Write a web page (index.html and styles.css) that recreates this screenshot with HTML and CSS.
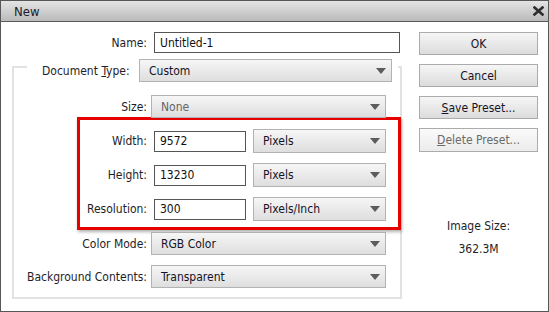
FILE: index.html
```html
<!DOCTYPE html>
<html lang="en">
<head>
  <meta charset="UTF-8">
  <title>New</title>
  <link rel="stylesheet" href="styles.css">
</head>
<body>
  <div class="window">
    <!-- Barre de titre -->
    <div class="titlebar">
      <span class="title">New</span>
      <svg class="close" width="11" height="10" viewBox="0 0 11 10">
        <path d="M1.5 1.5 L9.5 8.5 M9.5 1.5 L1.5 8.5" stroke="#2e2e2e" stroke-width="2.6" stroke-linecap="square"/>
      </svg>
    </div>

    <div class="main">
      <!-- Formulaire -->
      <div class="form">
        <div class="row name-row">
          <label>Name:</label>
          <input type="text" class="field name-field" value="Untitled-1">
        </div>

        <div class="group">
          <div class="legend">
            <label>Document <u>T</u>ype:</label>
            <div class="select doc-select">Custom</div>
          </div>

          <div class="row size-row">
            <label>Size:</label>
            <div class="select wide disabled">None</div>
          </div>

          <div class="highlight">
            <div class="row dim-row">
              <label>Width:</label>
              <input type="text" class="field dim-field" value="9572">
              <div class="select unit">Pixels</div>
            </div>
            <div class="row dim-row">
              <label>Height:</label>
              <input type="text" class="field dim-field" value="13230">
              <div class="select unit">Pixels</div>
            </div>
            <div class="row dim-row">
              <label>Resolution:</label>
              <input type="text" class="field dim-field" value="300">
              <div class="select unit">Pixels/Inch</div>
            </div>
          </div>

          <div class="row mode-row">
            <label>Color Mode:</label>
            <div class="select wide">RGB Color</div>
          </div>
          <div class="row bg-row">
            <label>Background Contents:</label>
            <div class="select wide">Transparent</div>
          </div>
        </div>
      </div>

      <!-- Boutons -->
      <div class="side">
        <button>OK</button>
        <button>Cancel</button>
        <button><u>S</u>ave Preset...</button>
        <button disabled><u>D</u>elete Preset...</button>
        <div class="image-size">
          <span>Image Size:</span>
          <span>362.3M</span>
        </div>
      </div>
    </div>
  </div>
</body>
</html>
```

FILE: styles.css
```css
/* Reset minimal */
* { box-sizing: border-box; margin: 0; padding: 0; }

body {
  font-family: "DejaVu Sans Condensed", "DejaVu Sans", sans-serif;
  font-size: 12px;
  color: #1e1e28;
  background: #fff;
}

/* Fenêtre */
.window {
  width: 549px;
  height: 312px;
  border: 1px solid #565656;
  background: #fff;
}
.titlebar {
  height: 21px;
  display: flex;
  align-items: center;
  justify-content: space-between;
  padding: 0 4px 0 13px;
  background: linear-gradient(#e4e4e4, #bababa);
  border-bottom: 1px solid #5a5a5a;
}
.title {
  font-size: 13px;
  color: #1a1a2a;
}

.main {
  display: flex;
  gap: 17px;
  padding: 10px 0 0 11px;
}
.form {
  width: 390px;
}

/* Lignes */
.row {
  display: flex;
  align-items: center;
}
.row label {
  flex: none;
  text-align: right;
}
.name-row label {
  width: 135px;
  margin-right: 7px;
}

.field {
  height: 21px;
  padding: 0 5px;
  font: inherit;
  color: #111;
  border: 1px solid #555;
  background: #fff;
}
.name-field {
  width: 246px;
}

.select {
  display: flex;
  align-items: center;
  justify-content: space-between;
  height: 23px;
  padding: 0 5px 0 9px;
  color: #141428;
  border: 1px solid #b2b2b2;
  background: linear-gradient(#f6f6f6, #dedede);
}
.select::after {
  content: "";
  border-left: 5px solid transparent;
  border-right: 5px solid transparent;
  border-top: 6px solid #5c5c5c;
}
.select.disabled {
  color: #666;
}

/* Groupe */
.group {
  height: 233px;
  margin-top: 13px;
  border: 2px solid #e2e2e2;
}
.legend {
  display: flex;
  align-items: center;
  justify-content: space-between;
  width: 371px;
  height: 23px;
  margin: -9px 0 0 13px;
  padding: 0 6px 0 15px;
  background: #fff;
}
.doc-select {
  width: 253px;
}

.size-row, .mode-row, .bg-row {
  height: 23px;
}
.size-row label, .mode-row label, .bg-row label {
  width: 133px;
  margin-right: 4px;
}
.wide {
  width: 235px;
}
.size-row { margin-top: 13px; }
.mode-row { margin-top: 2px; }
.bg-row { margin-top: 10px; }

/* Cadre rouge */
.highlight {
  display: flex;
  flex-direction: column;
  gap: 10px;
  width: 324px;
  margin: -1px 0 0 63px;
  padding: 9px 0 6px 0;
  border: 3px solid #e60000;
  box-shadow: 1px 2px 3px rgba(0,0,0,0.3);
}
.dim-row {
  height: 24px;
  gap: 7px;
}
.dim-row label {
  width: 67px;
}
.dim-field {
  width: 92px;
}
.unit {
  width: 133px;
  height: 24px;
}

/* Colonne de droite */
.side {
  width: 119px;
  display: flex;
  flex-direction: column;
  gap: 9px;
}
button {
  height: 23px;
  font: inherit;
  color: #141428;
  border: 1px solid #ababab;
  background: linear-gradient(#f6f6f6, #dcdcdc);
}
button:disabled {
  color: #6a6a6a;
  background: linear-gradient(#fafafa, #ececec);
  height: 24px;
}
.image-size {
  display: flex;
  flex-direction: column;
  align-items: center;
  gap: 8px;
  margin-top: 58px;
  line-height: 15px;
}
```
